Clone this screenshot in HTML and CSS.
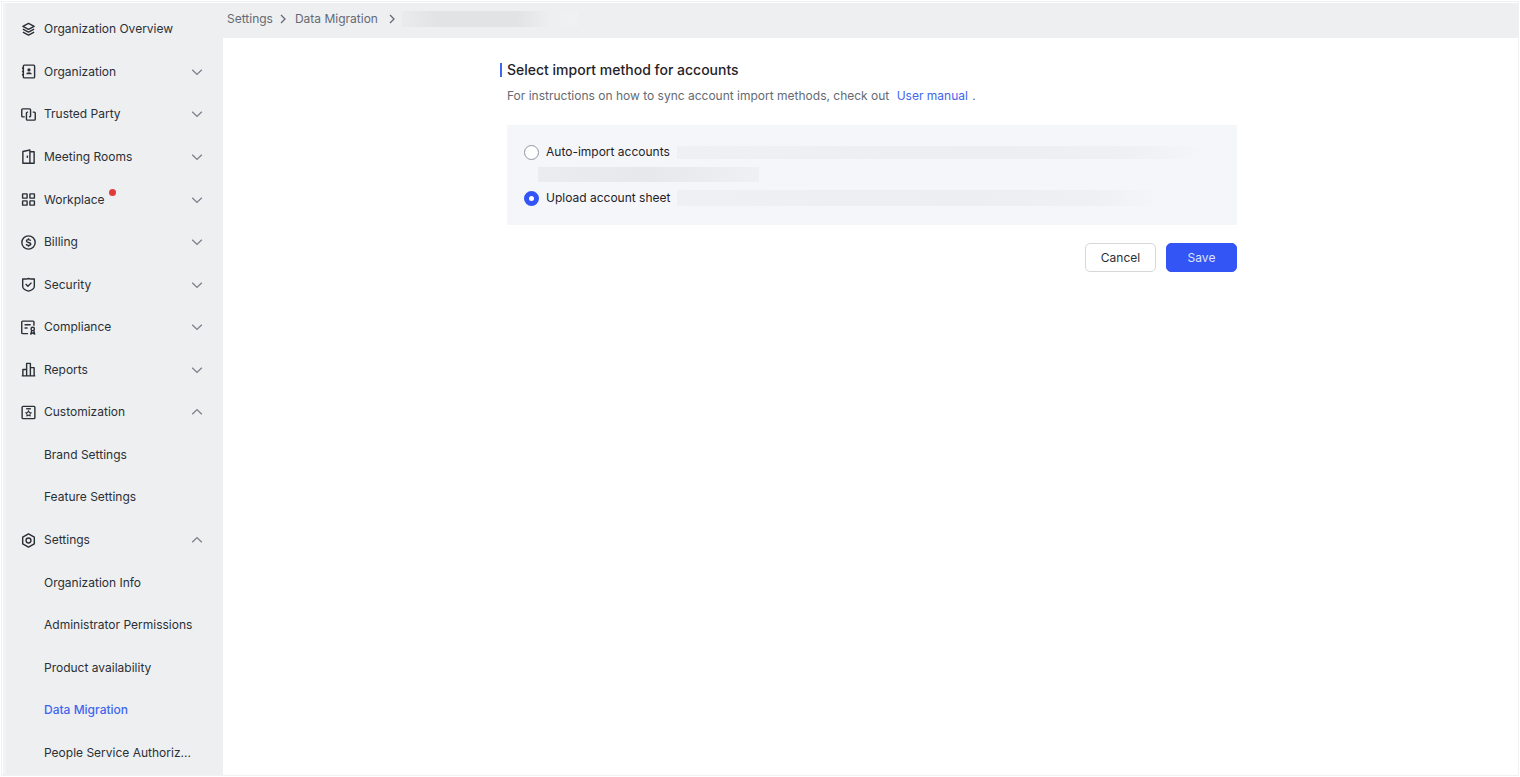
FILE: index.html
```html
<!DOCTYPE html>
<html lang="en">
<head>
    <meta charset="UTF-8" />
    <meta name="viewport" content="width=device-width, initial-scale=1.0"/>
    <title>Data Migration</title>
    <link rel="stylesheet" href="styles.css">
</head>
<body>

    <!-- Shared chevron shapes -->
    <svg class="sprite" aria-hidden="true">
        <symbol id="down" viewBox="0 0 12 12"><path d="M1.2 3.800 6 8.400l4.800-4.600"/></symbol>
        <symbol id="up" viewBox="0 0 12 12"><path d="M1.200 8.200 6 3.600l4.800 4.600"/></symbol>
        <symbol id="right" viewBox="0 0 12 12"><path d="M4 2l4 4-4 4"/></symbol>
    </svg>

    <div class="app">
        <!-- Sidebar -->
        <nav class="sidebar" aria-label="Admin menu">
            <a class="item" href="#">
                <svg class="icon" viewBox="0 0 16 16"><path d="M8 1.500 14 4.700 8 7.900 2 4.700z"/><path d="M2 7.600l6 3.200 6-3.200M2 10.800 8 14l6-3.200"/></svg>
                <span>Organization Overview</span>
            </a>
            <button class="item">
                <svg class="icon" viewBox="0 0 16 16"><rect x="2.500" y="1.200" width="12" height="13.600" rx="1"/><path d="M1 4.500h2M1 8h2M1 11.500h2"/><circle class="solid" cx="8.500" cy="6.300" r="1.700"/><path class="solid" d="M5.500 11c0-1.600 1.200-2.300 3-2.300s3 .7 3 2.300z"/></svg>
                <span>Organization</span>
                <svg class="chevron"><use href="#down"/></svg>
            </button>
            <button class="item">
                <svg class="icon" viewBox="0 0 16 16"><path d="M4 10.500H1.800a1 1 0 0 1-1-1V3a1 1 0 0 1 1-1h7.400a1 1 0 0 1 1 1v6.500a1 1 0 0 1-1 1H8.500"/><path d="M12.500 5.500h1.700a1 1 0 0 1 1 1V13a1 1 0 0 1-1 1H6.800a1 1 0 0 1-1-1V6.500a1 1 0 0 1 1-1h.7"/></svg>
                <span>Trusted Party</span>
                <svg class="chevron"><use href="#down"/></svg>
            </button>
            <button class="item">
                <svg class="icon" viewBox="0 0 16 16"><path d="M2 2.600 9.500 1v14.200H2z"/><path d="M9.500 3H14v12.200H9.500"/><path d="M6.800 7v2.500"/></svg>
                <span>Meeting Rooms</span>
                <svg class="chevron"><use href="#down"/></svg>
            </button>
            <button class="item">
                <svg class="icon" viewBox="0 0 16 16"><rect x="1.700" y="2" width="4.800" height="4.500" rx=".5"/><rect x="9.500" y="2" width="4.800" height="4.500" rx=".5"/><rect x="1.700" y="9.500" width="4.800" height="4.500" rx=".5"/><rect x="9.500" y="9.500" width="4.800" height="4.500" rx=".5"/></svg>
                <span class="flagged">Workplace</span>
                <svg class="chevron"><use href="#down"/></svg>
            </button>
            <button class="item">
                <svg class="icon" viewBox="0 0 16 16"><circle cx="8" cy="8" r="7.100"/><path d="M10.300 6.200C10.100 5.300 9.300 4.900 8 4.900c-1.400 0-2.200.5-2.200 1.500 0 2.200 4.600 1 4.600 3.200 0 1-.9 1.500-2.300 1.500-1.400 0-2.300-.5-2.500-1.500M8 3.500v1.400M8 11.100v1.400"/></svg>
                <span>Billing</span>
                <svg class="chevron"><use href="#down"/></svg>
            </button>
            <button class="item">
                <svg class="icon" viewBox="0 0 16 16"><path d="M1.800 2.200h3.700L8 1.600l2.500.6h3.700V10c0 2.200-3 4-6.200 5-3.200-1-6.200-2.800-6.200-5z"/><path d="M5 7.500l2.400 2.400L11.200 6"/></svg>
                <span>Security</span>
                <svg class="chevron"><use href="#down"/></svg>
            </button>
            <button class="item">
                <svg class="icon" viewBox="0 0 16 16"><path d="M7.500 14.500H1.800a1 1 0 0 1-1-1V2.200a1 1 0 0 1 1-1h11a1 1 0 0 1 1 1V6M3.800 5h6.500M3.800 8.500h3.200"/><circle cx="12.500" cy="9.500" r="1.800"/><path d="M11.500 11 10.400 15l2.100-1.200 2.100 1.200L13.500 11"/></svg>
                <span>Compliance</span>
                <svg class="chevron"><use href="#down"/></svg>
            </button>
            <button class="item">
                <svg class="icon" viewBox="0 0 16 16"><path d="M.8 14.800h14.400M2 14.800V8h4M6 14.800V1.500h4v13.300M10 6h4v8.800"/></svg>
                <span>Reports</span>
                <svg class="chevron"><use href="#down"/></svg>
            </button>
            <button class="item">
                <svg class="icon" viewBox="0 0 16 16"><rect x="1.200" y="1.500" width="13.600" height="13" rx="1"/><path d="M5.500 4h5"/><path class="thin" d="M8 6l.9 1.900 2.100.3-1.500 1.500.3 2.100L8 10.800l-1.800 1 .3-2.100L5 8.200l2.100-.3z"/></svg>
                <span>Customization</span>
                <svg class="chevron"><use href="#up"/></svg>
            </button>
            <a class="item sub" href="#"><span>Brand Settings</span></a>
            <a class="item sub" href="#"><span>Feature Settings</span></a>
            <button class="item">
                <svg class="icon" viewBox="0 0 16 16"><path d="M8 .9 14.200 4.400v7.200L8 15.100 1.800 11.600V4.400z"/><circle cx="8" cy="8" r="2.600"/></svg>
                <span>Settings</span>
                <svg class="chevron"><use href="#up"/></svg>
            </button>
            <a class="item sub" href="#"><span>Organization Info</span></a>
            <a class="item sub" href="#"><span>Administrator Permissions</span></a>
            <a class="item sub" href="#"><span>Product availability</span></a>
            <a class="item sub active" href="#"><span>Data Migration</span></a>
            <a class="item sub" href="#"><span>People Service Authoriz...</span></a>
        </nav>

        <div class="page">
            <!-- Breadcrumb -->
            <header class="breadcrumb">
                <a href="#">Settings</a>
                <svg class="separator"><use href="#right"/></svg>
                <a href="#">Data Migration</a>
                <svg class="separator wide"><use href="#right"/></svg>
                <span class="redacted crumb"></span>
            </header>

            <main class="content">
                <form class="import">
                    <h1>Select import method for accounts</h1>
                    <p class="hint">For instructions on how to sync account import methods, check out <a href="#">User manual</a> .</p>

                    <div class="options">
                        <div class="option">
                            <input type="radio" name="method" id="auto">
                            <label for="auto">Auto-import accounts</label>
                            <span class="redacted auto"></span>
                        </div>
                        <div class="redacted more"></div>
                        <div class="option">
                            <input type="radio" name="method" id="upload" checked>
                            <label for="upload">Upload account sheet</label>
                            <span class="redacted upload"></span>
                        </div>
                    </div>

                    <div class="actions">
                        <button type="button" class="btn">Cancel</button>
                        <button type="button" class="btn primary">Save</button>
                    </div>
                </form>
            </main>
        </div>
    </div>

</body>
</html>
```
FILE: styles.css
```css
:root {
    --bg: #eeeff1; /* Sidebar and breadcrumb background */
    --text: #2b2f36;
    --muted: #646a73;
    --blue: #3355f5;
    --link: #3f66ee;
}

* {
    box-sizing: border-box;
}

body {
    margin: 0;
    padding: 1px;
    font-family: Inter, "Liberation Sans", sans-serif;
    font-size: 12px;
    line-height: 20px;
    color: var(--text);
    background: #fff;
}

a {
    color: inherit;
    text-decoration: none;
}

button {
    font: inherit;
    color: inherit;
    cursor: pointer;
}

svg {
    fill: none;
    stroke: currentColor;
    flex: none;
}

.sprite {
    display: none;
}

/* Thin frame around the whole console */
.app {
    display: flex;
    min-height: calc(100vh - 2px);
    padding: 1px 0 0 1px;
    border: 1px solid #f0f1f3;
}

/* Sidebar: rows share the available height */
.sidebar {
    display: flex;
    flex-direction: column;
    width: 220px;
    flex: none;
    padding: 5px 20px 1px 15px;
    border-left: 3px solid #f2f3f5;
    background: var(--bg);
}

.item {
    display: flex;
    align-items: center;
    flex: 1 0 40px;
    gap: 8px;
    padding: 0;
    border: none;
    background: none;
    text-align: left;
}

.item span {
    white-space: nowrap;
}

.icon {
    width: 15px;
    height: 15px;
    stroke-width: 1.5;
    stroke-linejoin: round;
}

.icon .solid {
    fill: currentColor;
    stroke: none;
}

.icon .thin {
    stroke-width: 1.1;
}

.chevron {
    width: 12px;
    height: 12px;
    margin-left: auto;
    color: #7d828c;
    stroke-width: 1.4;
}

.sub {
    padding-left: 23px;
}

.active {
    color: var(--link);
    font-weight: 500;
}

/* Unread dot next to a menu label */
.item .flagged {
    position: relative;
}

.flagged::after {
    content: "";
    position: absolute;
    top: -1px;
    right: -11px;
    width: 7px;
    height: 7px;
    border-radius: 50%;
    background: #e13c39;
}

.page {
    display: flex;
    flex-direction: column;
    flex: 1;
    min-width: 0;
}

.breadcrumb {
    display: flex;
    align-items: center;
    gap: 4px;
    height: 35px;
    padding: 0 4px 4px;
    background: var(--bg);
    color: var(--muted);
}

.separator {
    width: 12px;
    height: 12px;
    margin-right: 2px;
    stroke-width: 1.3;
}

.separator.wide {
    margin: 0 0 0 4px;
}

/* Blurred-out details */
.redacted {
    background: linear-gradient(to right, #eff0f3, #edeef1 60%, #eff0f3 85%, #f5f6fa);
}

.redacted.crumb {
    width: 176px;
    height: 16px;
    background: linear-gradient(to right, #eaebed, #e2e3e5 20%, #e2e3e5 65%, #eeeff1 85%, #f0f1f3);
}

.redacted.auto {
    flex: 0 1 530px;
    height: 13px;
}

.redacted.more {
    width: 221px;
    height: 15px;
    margin: 5px 0 6px 14px;
    background: linear-gradient(to right, #ebecef, #e7e8eb 50%, #eff0f3);
}

.redacted.upload {
    flex: 0 1 487px;
    height: 16px;
}

.content {
    flex: 1;
    padding: 22px 22px 22px 25px;
}

.import {
    max-width: 730px;
    margin: 0 auto;
}

h1 {
    display: flex;
    align-items: center;
    margin: 0 0 6px -7px;
    font-size: 14px;
    font-weight: 500;
    line-height: 20px;
    color: #1f2329;
}

h1::before {
    content: "";
    width: 2px;
    height: 14px;
    margin-right: 5px;
    background: var(--link);
}

.hint {
    margin: 0 0 19px;
    color: var(--muted);
}

.hint a {
    margin: 0 1px 0 4px;
    color: var(--link);
}

.options {
    padding: 17px;
    background: #f5f6fa;
}

.option {
    display: flex;
    align-items: center;
    color: #1f2329;
}

.option label {
    margin: 0 7px;
}

.option input {
    appearance: none;
    flex: none;
    width: 15px;
    height: 15px;
    margin: 0;
    border: 1px solid #8f959e;
    border-radius: 50%;
    background: #fff;
}

.option input:checked {
    border: 5px solid var(--blue);
}

.actions {
    display: flex;
    justify-content: flex-end;
    gap: 10px;
    margin-top: 18px;
}

.btn {
    min-width: 71px;
    padding: 4px 12px;
    border: 1px solid #d5d7db;
    border-radius: 5px;
    background: #fff;
    line-height: 19px;
}

.btn.primary {
    border-color: var(--blue);
    background: var(--blue);
    color: #dfe4fd;
}
```
